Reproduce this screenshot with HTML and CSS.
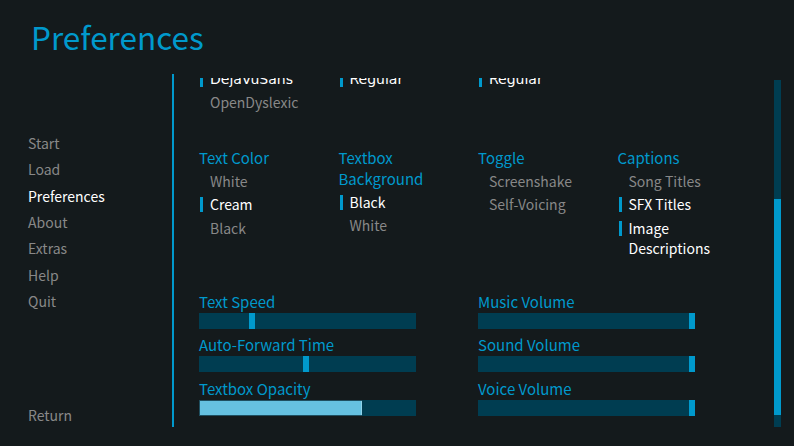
FILE: index.html
```html
<!DOCTYPE html>
<html lang="en">
<head>
<meta charset="utf-8">
<title>Preferences</title>
<link rel="stylesheet" href="styles.css">
</head>
<body>
<div class="screen">
  <header class="header">
    <h1 class="title">Preferences</h1>
  </header>
  <div class="main">
    <nav class="nav">
      <ul class="nav-list">
        <li class="nav-item">Start</li>
        <li class="nav-item">Load</li>
        <li class="nav-item is-current">Preferences</li>
        <li class="nav-item">About</li>
        <li class="nav-item">Extras</li>
        <li class="nav-item">Help</li>
        <li class="nav-item">Quit</li>
      </ul>
      <div class="nav-item nav-return">Return</div>
    </nav>
    <div class="divider"></div>
    <div class="viewport">
      <div class="scroll-content">
        <div class="pref-row pref-row-first">
          <div class="pref-col">
            <div class="opt is-on font-dejavu">DejaVuSans</div>
            <div class="opt">OpenDyslexic</div>
          </div>
          <div class="pref-col">
            <div class="opt is-on font-dejavu">Regular</div>
          </div>
          <div class="pref-col">
            <div class="opt is-on font-dejavu">Regular</div>
          </div>
          <div class="pref-col"></div>
        </div>

        <div class="pref-row">
          <div class="pref-col">
            <h2 class="pref-label">Text Color</h2>
            <div class="opt">White</div>
            <div class="opt is-on">Cream</div>
            <div class="opt">Black</div>
          </div>
          <div class="pref-col">
            <h2 class="pref-label">Textbox Background</h2>
            <div class="opt is-on">Black</div>
            <div class="opt">White</div>
          </div>
          <div class="pref-col">
            <h2 class="pref-label">Toggle</h2>
            <div class="opt">Screenshake</div>
            <div class="opt">Self-Voicing</div>
          </div>
          <div class="pref-col">
            <h2 class="pref-label">Captions</h2>
            <div class="opt">Song Titles</div>
            <div class="opt is-on">SFX Titles</div>
            <div class="opt is-on">Image Descriptions</div>
          </div>
        </div>

        <div class="slider-grid">
          <div class="slider-col">
            <div class="slider">
              <div class="slider-label">Text Speed</div>
              <div class="bar"><div class="bar-fill" style="width:50px"></div><div class="thumb"></div></div>
            </div>
            <div class="slider">
              <div class="slider-label">Auto-Forward Time</div>
              <div class="bar"><div class="bar-fill" style="width:104px"></div><div class="thumb"></div></div>
            </div>
            <div class="slider">
              <div class="slider-label">Textbox Opacity</div>
              <div class="bar"><div class="bar-fill bar-fill-hover" style="width:163px"></div></div>
            </div>
          </div>
          <div class="slider-col">
            <div class="slider">
              <div class="slider-label">Music Volume</div>
              <div class="bar"><div class="bar-fill" style="width:211px"></div><div class="thumb"></div></div>
            </div>
            <div class="slider">
              <div class="slider-label">Sound Volume</div>
              <div class="bar"><div class="bar-fill" style="width:211px"></div><div class="thumb"></div></div>
            </div>
            <div class="slider">
              <div class="slider-label">Voice Volume</div>
              <div class="bar"><div class="bar-fill" style="width:211px"></div><div class="thumb"></div></div>
            </div>
          </div>
        </div>
      </div>
    </div>
    <div class="scrollbar">
      <div class="scroll-before"></div>
      <div class="scroll-thumb"></div>
    </div>
  </div>
</div>
</body>
</html>
```

FILE: styles.css
```css
* {
  box-sizing: border-box;
}

html, body {
  margin: 0;
  padding: 0;
  background: #141a1c;
}

.screen {
  width: 794px;
  height: 446px;
  overflow: hidden;
  background: #141a1c;
  display: flex;
  flex-direction: column;
  font-family: "Noto Sans CJK SC", "Noto Sans", sans-serif;
  color: #888888;
}

.header {
  height: 74px;
  flex: none;
  padding: 13px 0 0 31px;
}

.title {
  margin: 0;
  font-size: 31.5px;
  line-height: 46px;
  font-weight: 400;
  color: #0099cc;
}

.main {
  height: 353px;
  flex: none;
  display: flex;
}

/* navigation */
.nav {
  width: 172px;
  flex: none;
  display: flex;
  flex-direction: column;
  padding: 56px 0 0 28px;
}

.nav-list {
  list-style: none;
  margin: 0;
  padding: 0;
}

.nav-item {
  font-size: 14px;
  line-height: 26.33px;
  color: #888888;
  white-space: nowrap;
}

.nav-item.is-current {
  color: #ffffff;
}

.nav-return {
  margin-top: auto;
  margin-bottom: -1px;
}

.divider {
  width: 2px;
  flex: none;
  background: #0099cc;
}

/* scrolling viewport */
.viewport {
  width: 600px;
  flex: none;
  overflow: hidden;
  margin-top: 4px;
  padding-left: 25px;
}

.scroll-content {
  margin-top: -11px;
}

.pref-row {
  display: grid;
  grid-template-columns: repeat(4, 139.5px);
  align-items: start;
}

.pref-row-first {
  margin-bottom: 33px;
}

.pref-col {
  display: flex;
  flex-direction: column;
  width: 124px;
}

.pref-label {
  margin: 0 0 1.5px 0;
  font-size: 15px;
  line-height: 21px;
  font-weight: 400;
  color: #0099cc;
  width: 110px;
}

.opt {
  display: flex;
  align-items: flex-start;
  padding: 2px 0;
  font-size: 14px;
  line-height: 19.65px;
  color: #888888;
}

.opt::before {
  content: "";
  flex: none;
  width: 3px;
  height: 15px;
  margin: 2px 7px 0 1px;
  background: transparent;
}

.opt.is-on {
  color: #ffffff;
}

.opt.is-on::before {
  background: #0099cc;
}

.font-dejavu {
  font-family: "DejaVu Sans", sans-serif;
  padding: 3px 0 1px 0;
}

/* sliders */
.slider-grid {
  display: grid;
  grid-template-columns: 279px 279px;
  margin-top: 29.5px;
}

.slider-col {
  display: flex;
  flex-direction: column;
}

.slider {
  display: flex;
  flex-direction: column;
  margin-bottom: 4.5px;
}

.slider-label {
  font-size: 15px;
  line-height: 23px;
  color: #0099cc;
  white-space: nowrap;
}

.bar {
  width: 217px;
  height: 16px;
  background: #003d51;
  display: flex;
}

.bar-fill {
  height: 16px;
  background: #003d51;
}

.bar-fill-hover {
  background: #66c1e0;
  box-shadow: inset 1px 1px 0 #1f4f60, inset 0 -1px 0 #1f4f60, inset -1px 0 0 #8fd3ea;
}

.thumb {
  width: 6px;
  height: 16px;
  background: #0099cc;
}

/* scrollbar */
.scrollbar {
  width: 7px;
  flex: none;
  margin: 6px 0 0 0;
  background: #003d51;
  display: flex;
  flex-direction: column;
}

.scroll-before {
  height: 119px;
}

.scroll-thumb {
  height: 216px;
  background: #0099cc;
}
```
